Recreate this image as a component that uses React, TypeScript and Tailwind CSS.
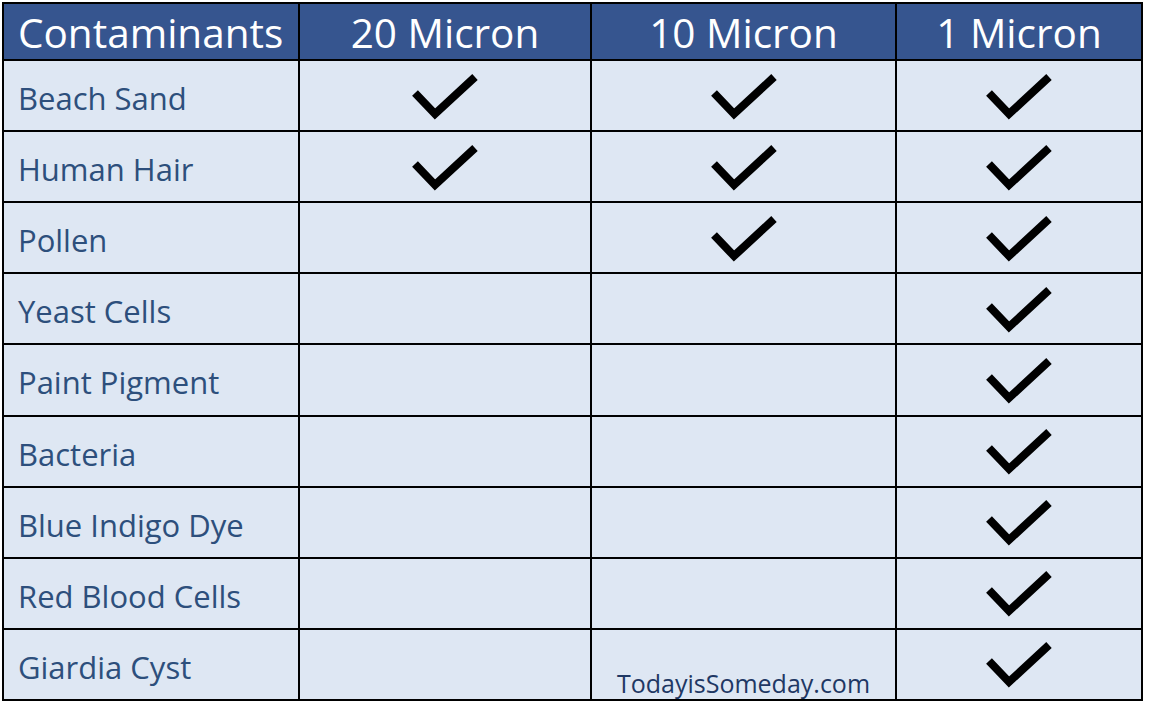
import React from "react";

const rows = [
  { name: "Beach Sand", checks: [true, true, true] },
  { name: "Human Hair", checks: [true, true, true] },
  { name: "Pollen", checks: [false, true, true] },
  { name: "Yeast Cells", checks: [false, false, true] },
  { name: "Paint Pigment", checks: [false, false, true] },
  { name: "Bacteria", checks: [false, false, true] },
  { name: "Blue Indigo Dye", checks: [false, false, true] },
  { name: "Red Blood Cells", checks: [false, false, true] },
  { name: "Giardia Cyst", checks: [false, false, true] },
];

function Check() {
  return (
    <svg width="66" height="46" viewBox="0 0 66 46" fill="none" className="mt-[2px]">
      <polyline
        points="3,19 23,40 63,3"
        stroke="#000"
        strokeWidth="8"
        strokeLinejoin="miter"
        strokeLinecap="butt"
      />
    </svg>
  );
}

export default function App() {
  const font = { fontFamily: '"Open Sans", "Noto Sans", sans-serif' };

  return (
    <div className="w-[1150px] h-[706px] bg-white pt-[2px] pl-[2px]" style={font}>
      <div className="grid w-[1141px] h-[699px] bg-black p-[2px] gap-[2px] grid-cols-[294px_290px_303px_244px] grid-rows-[55px_repeat(9,1fr)]">
        {/* Header */}
        <div className="bg-[#36558f] flex items-center pl-[14px] pt-[4px] text-white text-[40.5px] leading-none">
          Contaminants
        </div>
        {["20 Micron", "10 Micron", "1 Micron"].map((h) => (
          <div key={h} className="bg-[#36558f] flex items-center justify-center pt-[4px] text-white text-[40.5px] leading-none">
            {h}
          </div>
        ))}

        {/* Body */}
        {rows.map((row, i) => (
          <React.Fragment key={row.name}>
            <div className="bg-[#dee7f3] flex items-center pl-[14px] pt-[6px] text-[#2d4f7c] text-[31px] leading-none">
              {row.name}
            </div>
            {row.checks.map((c, j) => (
              <div key={j} className="bg-[#dee7f3] relative flex items-center justify-center">
                {c && <Check />}
                {i === rows.length - 1 && j === 1 && (
                  <span className="absolute bottom-[3px] left-0 right-0 text-center text-[25px] leading-none text-[#1f3864]">
                    TodayisSomeday.com
                  </span>
                )}
              </div>
            ))}
          </React.Fragment>
        ))}
      </div>
    </div>
  );
}
